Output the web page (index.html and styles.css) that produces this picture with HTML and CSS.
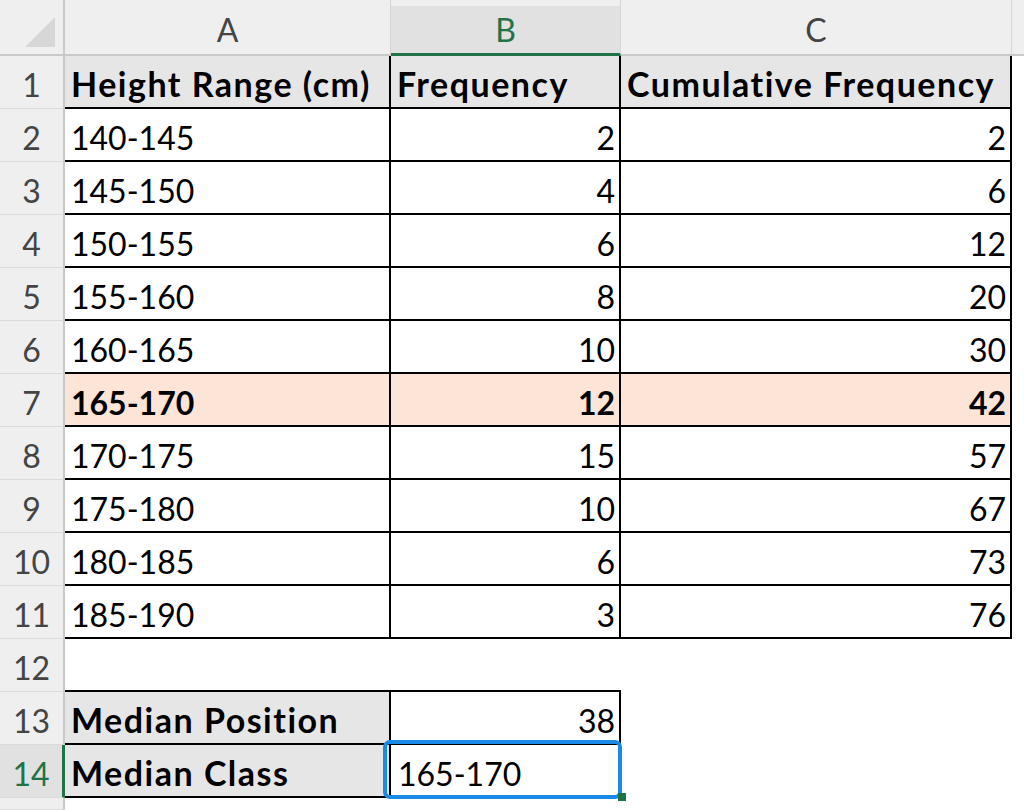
FILE: index.html
```html
<!DOCTYPE html>
<html>
<head>
<meta charset="utf-8">
<link rel="stylesheet" href="styles.css">
</head>
<body>
<div class="sheet">
  <div class="corner"><svg class="tri" width="65" height="56" viewBox="0 0 65 56"><polygon points="55,17 55,47 25,47" fill="#d7d7d7"/></svg></div>
  <div class="ch">A</div>
  <div class="ch sel">B</div>
  <div class="ch">C</div>
  <div class="ch last"></div>

  <div class="rh">1</div>
  <div class="c hd">Height Range (cm)</div>
  <div class="c hd">Frequency</div>
  <div class="c hd">Cumulative Frequency</div>
  <div class="blank"></div>

  <div class="rh">2</div><div class="c">140-145</div><div class="c num">2</div><div class="c num">2</div><div class="blank"></div>
  <div class="rh">3</div><div class="c">145-150</div><div class="c num">4</div><div class="c num">6</div><div class="blank"></div>
  <div class="rh">4</div><div class="c">150-155</div><div class="c num">6</div><div class="c num">12</div><div class="blank"></div>
  <div class="rh">5</div><div class="c">155-160</div><div class="c num">8</div><div class="c num">20</div><div class="blank"></div>
  <div class="rh">6</div><div class="c">160-165</div><div class="c num">10</div><div class="c num">30</div><div class="blank"></div>
  <div class="rh">7</div><div class="c hl">165-170</div><div class="c hl num">12</div><div class="c hl num">42</div><div class="blank"></div>
  <div class="rh">8</div><div class="c">170-175</div><div class="c num">15</div><div class="c num">57</div><div class="blank"></div>
  <div class="rh">9</div><div class="c">175-180</div><div class="c num">10</div><div class="c num">67</div><div class="blank"></div>
  <div class="rh">10</div><div class="c">180-185</div><div class="c num">6</div><div class="c num">73</div><div class="blank"></div>
  <div class="rh">11</div><div class="c">185-190</div><div class="c num">3</div><div class="c num">76</div><div class="blank"></div>

  <div class="rh">12</div><div class="bb"></div><div class="bb"></div><div class="blank"></div><div class="blank"></div>

  <div class="rh">13</div><div class="c hd">Median Position</div><div class="c num">38</div><div class="blank"></div><div class="blank"></div>
  <div class="rh sel">14</div><div class="c hd">Median Class</div><div class="c active">165-170<span class="focus"></span><span class="handle"></span></div><div class="blank"></div><div class="blank"></div>

  <div class="rh"></div><div class="blank"></div><div class="blank"></div><div class="blank"></div><div class="blank"></div>
</div>
</body>
</html>
```

FILE: styles.css
```css
* { box-sizing: border-box; }
html, body {
  margin: 0;
  padding: 0;
  background: #ffffff;
  overflow: hidden;
}
.sheet {
  display: grid;
  grid-template-columns: 65px 326px 230px 391px 12px;
  grid-template-rows: 56px repeat(14, 53px) 12px;
  width: 1024px;
  height: 810px;
  font-family: Lato, "Liberation Sans", sans-serif;
  font-size: 32px;
  color: #000;
}
.corner {
  background: #efefef;
  border-right: 2px solid #c9c9c9;
  border-bottom: 2px solid #c9c9c9;
}
.tri { display: block; }
.ch {
  background: #efefef;
  border-right: 1px solid #d6d6d6;
  border-bottom: 2px solid #c9c9c9;
  color: #444;
  text-align: center;
  line-height: 56px;
  padding-top: 2px;
}
.ch.sel {
  background: linear-gradient(#efefef 0 6px, #e1e1e1 6px);
  border-bottom: 3px solid #217346;
  color: #217346;
}
.ch.last { border-right: none; }
.rh {
  background: #efefef;
  border-right: 2px solid #c9c9c9;
  border-bottom: 1px solid #dadada;
  color: #444;
  text-align: center;
  line-height: 53px;
  padding-top: 2px;
}
.rh.sel {
  background: #e1e1e1;
  border-right: 3px solid #217346;
  color: #217346;
}
.c {
  border-right: 2px solid #000;
  border-bottom: 2px solid #000;
  line-height: 53px;
  padding: 2px 4px 0 6px;
  white-space: nowrap;
  overflow: visible;
}
.num { text-align: right; }
.hd {
  font-weight: 700;
  font-size: 34px;
  letter-spacing: 1.5px;
  line-height: 51px;
  background: #e7e6e6;
}
.hl {
  font-weight: 700;
  background: #fce4d6;
}
.bb { border-bottom: 2px solid #000; }
.blank { background: #fff; }
.active {
  position: relative;
  padding-left: 7px;
}
.focus {
  position: absolute;
  left: -8px;
  top: -5px;
  right: -3px;
  bottom: -3px;
  border: 4px solid #1a8ae8;
  border-radius: 7px;
}
.handle {
  position: absolute;
  right: -7px;
  bottom: -5px;
  width: 8px;
  height: 8px;
  background: #217346;
}
```
